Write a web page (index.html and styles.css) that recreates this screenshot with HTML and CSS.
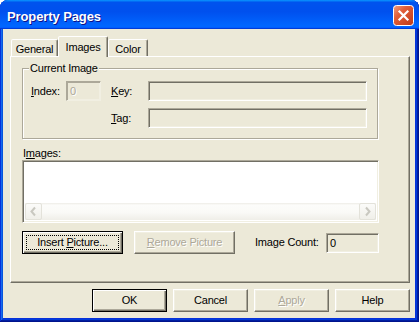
FILE: index.html
```html
<!DOCTYPE html>
<html>
<head>
<meta charset="utf-8">
<title>Property Pages</title>
<link rel="stylesheet" href="styles.css">
</head>
<body>
<div class="window">
  <div class="titlebar">
    <span class="title">Property Pages</span>
    <span class="close">
      <svg width="21" height="21" viewBox="0 0 21 21">
        <defs>
          <linearGradient id="cg" x1="0" y1="0" x2="1" y2="1">
            <stop offset="0" stop-color="#F0A083"/>
            <stop offset="0.35" stop-color="#E15F3A"/>
            <stop offset="1" stop-color="#C03915"/>
          </linearGradient>
        </defs>
        <rect x="0.5" y="0.5" width="20" height="20" rx="3" fill="url(#cg)" stroke="#fff"/>
        <path d="M6.5 6.5 L14.5 14.5 M14.5 6.5 L6.5 14.5" stroke="#fff" stroke-width="2.2" stroke-linecap="square"/>
      </svg>
    </span>
  </div>
  <div class="client">
    <div class="tabs">
      <div class="tab tab-general"><span>General</span></div>
      <div class="tab tab-images active"><span>Images</span></div>
      <div class="tab tab-color"><span>Color</span></div>
    </div>
    <div class="panel">
      <fieldset class="group">
        <legend>Current Image</legend>
        <div class="fields">
          <span class="lbl lbl-index"><u>I</u>ndex:</span>
          <div class="edit edit-index disabled-text"><span>0</span></div>
          <span class="lbl lbl-key"><u>K</u>ey:</span>
          <div class="edit edit-key"></div>
          <span class="lbl lbl-tag"><u>T</u>ag:</span>
          <div class="edit edit-tag"></div>
        </div>
      </fieldset>
      <div class="images-label">I<u>m</u>ages:</div>
      <div class="listbox">
        <div class="list-area"></div>
        <div class="hscroll">
          <span class="sbtn">
            <svg width="15" height="15" viewBox="0 0 15 15"><path d="M9 3.5 L5.5 7.5 L9 11.5" fill="none" stroke="#C9C8C0" stroke-width="2"/></svg>
          </span>
          <span class="track"></span>
          <span class="sbtn">
            <svg width="15" height="15" viewBox="0 0 15 15"><path d="M6 3.5 L9.5 7.5 L6 11.5" fill="none" stroke="#C9C8C0" stroke-width="2"/></svg>
          </span>
        </div>
      </div>
      <div class="action-row">
        <div class="btn default btn-insert"><span class="focus"><span>Insert <u>P</u>icture...</span></span></div>
        <div class="btn btn-remove disabled-text"><span><u>R</u>emove Picture</span></div>
        <span class="count-label">Image Count:</span>
        <div class="edit edit-count"><span>0</span></div>
      </div>
    </div>
    <div class="dialog-buttons">
      <div class="btn default dbtn"><span>OK</span></div>
      <div class="btn dbtn"><span>Cancel</span></div>
      <div class="btn dbtn disabled-text"><span><u>A</u>pply</span></div>
      <div class="btn dbtn"><span>Help</span></div>
    </div>
  </div>
</div>
</body>
</html>
```

FILE: styles.css
```css
html, body {
  margin: 0;
  padding: 0;
  background: #ffffff;
}

body {
  font-family: "Liberation Sans", Arial, sans-serif;
  font-size: 11px;
  letter-spacing: -0.2px;
  color: #000;
}

.window {
  width: 419px;
  height: 322px;
  box-sizing: border-box;
  display: flex;
  flex-direction: column;
  background: #0831d9;
  border-radius: 8px 8px 0 0;
  box-shadow: inset -1px -1px #00138c, inset 1px 1px #0831d9, inset -2px -2px #001ea0, inset 2px 2px #166aee, inset -3px -3px #003bda, inset 3px 3px #0855dd;
}

.titlebar {
  flex: none;
  height: 29px;
  box-sizing: border-box;
  display: flex;
  align-items: flex-start;
  justify-content: space-between;
  padding: 0 5px 0 7px;
  border-radius: 8px 8px 0 0;
  background: linear-gradient(180deg, #0997ff, #0053ee 8%, #0050ee 40%, #0066ff 88%, #0066ff 93%, #005bff 95%, #003dd7 96%, #003dd7);
}

.title {
  margin-top: 9px;
  line-height: 15px;
  font-size: 13px;
  font-weight: bold;
  letter-spacing: -0.1px;
  color: #fff;
  text-shadow: 1px 1px #0f1089;
}

.close {
  margin-top: 5px;
  width: 21px;
  height: 21px;
  display: block;
}

.close svg {
  display: block;
}

.client {
  flex: 1;
  margin: 0 4px 4px 3px;
  background: #ECE9D8;
  display: flex;
  flex-direction: column;
}

/* Tabs */
.tabs {
  flex: none;
  height: 20px;
  margin-top: 7px;
  padding-left: 8px;
  display: flex;
  align-items: flex-end;
  position: relative;
  z-index: 1;
}

.tab {
  box-sizing: border-box;
  height: 17px;
  border: 1px solid;
  border-bottom: none;
  border-color: #fff #716F64 transparent #fff;
  box-shadow: inset -1px 0 #ACA899;
  border-radius: 2px 2px 0 0;
  background: #ECE9D8;
  display: flex;
  align-items: center;
  justify-content: center;
  padding-top: 1px;
}

.tab-general { width: 47px; }
.tab-images { width: 50px; }
.tab-color { width: 40px; }

.tab.active {
  height: 21px;
  margin-bottom: -1px;
  padding-top: 0;
  padding-bottom: 1px;
}

/* Panel */
.panel {
  flex: none;
  height: 227px;
  box-sizing: border-box;
  margin: 0 5px 0 7px;
  border: 1px solid;
  border-color: #fff #716F64 #716F64 #fff;
  box-shadow: inset -1px -1px #ACA899;
  padding: 5px 0 0 11px;
}

.group {
  width: 356px;
  box-sizing: border-box;
  margin: 0;
  padding: 6px 10px 10px 8px;
  border: 1px solid #ACA899;
  box-shadow: inset 1px 1px #fff, 1px 1px #fff;
  min-inline-size: 0;
}

.group legend {
  margin-left: -2px;
  padding: 0 1px;
  line-height: 13px;
  background: #ECE9D8;
}

.fields {
  display: grid;
  grid-template-columns: 35px 35px 10px 37px 219px;
  grid-template-rows: 20px 20px;
  row-gap: 7px;
}

.lbl {
  align-self: center;
  line-height: 13px;
}

.lbl-index { grid-column: 1; grid-row: 1; }
.edit-index { grid-column: 2; grid-row: 1; }
.lbl-key { grid-column: 4; grid-row: 1; }
.edit-key { grid-column: 5; grid-row: 1; }
.lbl-tag { grid-column: 4; grid-row: 2; }
.edit-tag { grid-column: 5; grid-row: 2; }

.edit {
  box-sizing: border-box;
  border: 1px solid;
  border-color: #ACA899 #fff #fff #ACA899;
  box-shadow: inset 1px 1px #716F64, inset -1px -1px #F1EFE2;
  background: #ECE9D8;
  display: flex;
  align-items: center;
  padding-left: 3px;
}

.edit-index {
  box-shadow: inset 1px 1px #ACA899, inset -1px -1px #F1EFE2;
  border-color: #ACA899 #F1EFE2 #F1EFE2 #ACA899;
}

.disabled-text {
  color: #ACA899;
  text-shadow: 1px 1px #fff;
}

.images-label {
  margin-top: 7px;
  padding-left: 1px;
  line-height: 14px;
}

.listbox {
  width: 357px;
  height: 63px;
  box-sizing: border-box;
  border: 1px solid;
  border-color: #ACA899 #fff #fff #ACA899;
  box-shadow: inset 1px 1px #716F64, inset -1px -1px #F1EFE2;
  background: #fff;
  padding: 2px;
  display: flex;
  flex-direction: column;
}

.list-area {
  flex: 1;
}

.hscroll {
  flex: none;
  height: 17px;
  display: flex;
  background: linear-gradient(to bottom, #EDECE6 0, #FCFCFA 12%, #FAFAF7 55%, #EFEEE8 100%);
}

.track {
  flex: 1;
}

.sbtn {
  width: 17px;
  height: 17px;
  box-sizing: border-box;
  border: 1px solid #E3E2DA;
  border-radius: 2px;
  background: linear-gradient(to bottom, #FBFBF9, #F0EFE9);
  display: flex;
  align-items: center;
  justify-content: center;
}

.sbtn svg {
  display: block;
}

/* Buttons */
.action-row {
  margin-top: 8px;
  height: 23px;
  display: flex;
  align-items: center;
}

.btn {
  box-sizing: border-box;
  height: 23px;
  background: #ECE9D8;
  border: 1px solid;
  border-color: #fff #716F64 #716F64 #fff;
  box-shadow: inset -1px -1px #ACA899, inset 1px 1px #F1EFE2;
  display: flex;
  align-items: center;
  justify-content: center;
  line-height: 13px;
}

.btn.default {
  border-color: #000;
  box-shadow: inset 1px 1px #fff, inset -1px -1px #716F64, inset -2px -2px #ACA899;
}

.btn-insert {
  width: 101px;
  padding: 3px;
  align-items: stretch;
}

.focus {
  flex: 1;
  border: 1px dotted #000;
  display: flex;
  align-items: center;
  justify-content: center;
}

.btn-remove {
  width: 101px;
  margin-left: 11px;
}

.count-label {
  margin-left: 20px;
  line-height: 13px;
}

.edit-count {
  margin-left: auto;
  margin-right: 30px;
  width: 53px;
  height: 20px;
}

.dialog-buttons {
  margin-top: 6px;
  display: flex;
  justify-content: flex-end;
  gap: 6px;
  padding-right: 5px;
}

.dbtn {
  width: 75px;
}
```
